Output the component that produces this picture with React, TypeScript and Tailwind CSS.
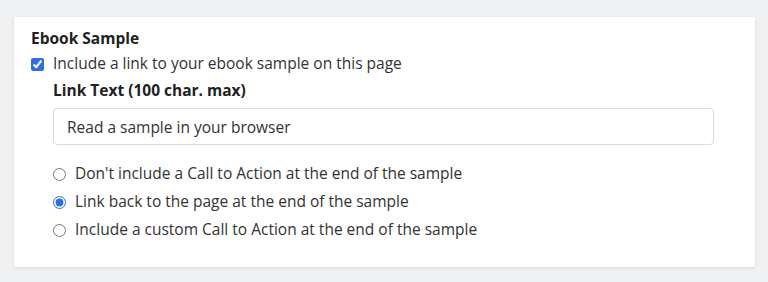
import React from "react";

export default function App() {
  return (
    <div className="w-[768px] h-[282px] bg-[#eff1f3] pt-[17px] pl-[14px]" style={{ fontFamily: '"Open Sans", sans-serif' }}>
      <div className="w-[741px] h-[250px] bg-white shadow-[0_1px_3px_rgba(0,0,0,0.12)] pl-[17px] pr-[41px] pt-[10px]">
        <div className="text-[15.5px] leading-[22px] font-bold text-[#222]">Ebook Sample</div>
        <label className="flex items-center mt-[4px] h-[22px]">
          <input type="checkbox" defaultChecked className="w-[13px] h-[13px] m-0 accent-[#2f6fe4]" />
          <span className="ml-[9px] text-[15.5px] text-[#333]">Include a link to your ebook sample on this page</span>
        </label>
        <div className="ml-[22px]">
          <div className="mt-[4px] text-[15.5px] leading-[22px] font-bold text-[#222]">Link Text (100 char. max)</div>
          <input
            type="text"
            defaultValue="Read a sample in your browser"
            className="mt-[7px] w-[661px] h-[37px] border border-[#d9dbde] rounded-[4px] px-[13px] text-[15.5px] text-[#333] outline-none"
            style={{ fontFamily: '"Open Sans", sans-serif' }}
          />
          <div className="mt-[18px] flex flex-col gap-[6px]">
            {[
              ["Don't include a Call to Action at the end of the sample", false],
              ["Link back to the page at the end of the sample", true],
              ["Include a custom Call to Action at the end of the sample", false],
            ].map(([t, c]) => (
              <label key={t as string} className="flex items-center h-[22px]">
                <input type="radio" name="cta" defaultChecked={c as boolean} className="w-[13px] h-[13px] m-0 accent-[#2f6fe4]" />
                <span className="ml-[9px] text-[15.5px] text-[#333]">{t as string}</span>
              </label>
            ))}
          </div>
        </div>
      </div>
    </div>
  );
}
